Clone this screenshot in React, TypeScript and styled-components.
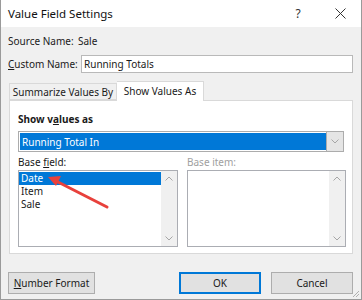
import styled, { createGlobalStyle } from "styled-components"

const GlobalStyle = createGlobalStyle`
  html, body {
    margin: 0;
    padding: 0;
    background: #ffffff;
  }
  body {
    font-family: "Noto Sans", "Open Sans", sans-serif;
    font-size: 10px;
    color: #1a1a1a;
    white-space: nowrap;
  }
`

const Window = styled.div`
  position: relative;
  width: 362px;
  height: 300px;
  box-sizing: border-box;
  border: 1px solid #9a9a9a;
  border-top: none;
  display: flex;
  flex-direction: column;
  background: #f0f0f0;
  overflow: hidden;
`

const TitleBar = styled.div`
  height: 27px;
  background: #ffffff;
  display: flex;
  align-items: center;
  padding-left: 7px;
`

const Title = styled.div`
  flex: 1;
  font-size: 11.5px;
  color: #111;
`

const TitleButton = styled.div`
  width: 42px;
  height: 27px;
  display: flex;
  align-items: center;
  justify-content: center;
  font-size: 12px;
  color: #333;
`

const Body = styled.div`
  flex: 1;
  display: flex;
  flex-direction: column;
  padding: 3px 8px 0 7px;
`

const FieldRow = styled.div<{ $h: number; $mt?: number }>`
  height: ${(p) => p.$h}px;
  margin-top: ${(p) => p.$mt ?? 0}px;
  display: flex;
  align-items: center;
`

const FieldLabel = styled.span<{ $w: number }>`
  width: ${(p) => p.$w}px;
  flex: none;
`

const TextInput = styled.div`
  flex: 1;
  height: 18px;
  box-sizing: border-box;
  border: 1px solid #b9b9b9;
  background: #ffffff;
  display: flex;
  align-items: center;
  padding-left: 2px;
`

const TabStrip = styled.div`
  margin-top: 8px;
  height: 19px;
  display: flex;
  align-items: flex-end;
  padding-left: 1px;
  position: relative;
  z-index: 1;
`

const Tab = styled.div<{ $active?: boolean; $w: number }>`
  width: ${(p) => p.$w}px;
  height: ${(p) => (p.$active ? 20 : 17)}px;
  box-sizing: border-box;
  border: 1px solid #d9d9d9;
  border-bottom: ${(p) => (p.$active ? "none" : "1px solid #d9d9d9")};
  border-left: ${(p) => (p.$active ? "none" : "1px solid #d9d9d9")};
  background: ${(p) => (p.$active ? "#ffffff" : "#f0f0f0")};
  display: flex;
  align-items: center;
  justify-content: center;
  padding-bottom: ${(p) => (p.$active ? 1 : 0)}px;
  margin-bottom: ${(p) => (p.$active ? -1 : 0)}px;
`

const Panel = styled.div`
  height: 154px;
  box-sizing: border-box;
  border: 1px solid #d9d9d9;
  background: #ffffff;
  padding: 0 8px 0 8px;
  display: flex;
  flex-direction: column;
  margin-left: 1px;
`

const SectionLabel = styled.div`
  margin-top: 10px;
  height: 16px;
  line-height: 16px;
  font-weight: 700;
`

const Dropdown = styled.div`
  margin-top: 4px;
  height: 21px;
  box-sizing: border-box;
  border: 1px solid #acacac;
  display: flex;
  padding: 1px 0 1px 1px;
`

const DropValue = styled.div`
  flex: 1;
  background: #0078d7;
  color: #ffffff;
  display: flex;
  align-items: center;
  padding-left: 2px;
`

const DropButton = styled.div`
  width: 16px;
  margin-top: -1px;
  margin-bottom: -1px;
  background: #e5e5e5;
  border-left: 1px solid #acacac;
  display: flex;
  align-items: center;
  justify-content: center;
`

const ListGrid = styled.div`
  display: grid;
  grid-template-columns: 160px 159px;
  column-gap: 9px;
  margin-top: 2px;
`

const ListLabel = styled.div<{ $disabled?: boolean }>`
  height: 16px;
  line-height: 16px;
  color: ${(p) => (p.$disabled ? "#a0a0a0" : "#1a1a1a")};
`

const ListBox = styled.div`
  height: 77px;
  box-sizing: border-box;
  border: 1px solid #abadb3;
  background: #ffffff;
  display: flex;
`

const ListItems = styled.div`
  flex: 1;
  padding-top: 1px;
`

const ListItem = styled.div<{ $selected?: boolean }>`
  height: 13px;
  line-height: 13px;
  padding-left: 2px;
  background: ${(p) => (p.$selected ? "#0078d7" : "transparent")};
  color: ${(p) => (p.$selected ? "#ffffff" : "#1a1a1a")};
`

const ScrollBar = styled.div`
  width: 16px;
  background: #f0f0f0;
  display: flex;
  flex-direction: column;
  justify-content: space-between;
  align-items: center;
  padding: 5px 0;
`

const Footer = styled.div`
  margin-top: 18px;
  display: flex;
  align-items: center;
`

const Button = styled.div<{ $w: number; $primary?: boolean }>`
  width: ${(p) => p.$w}px;
  height: 22px;
  box-sizing: border-box;
  border: 1px solid ${(p) => (p.$primary ? "#0078d7" : "#adadad")};
  box-shadow: ${(p) => (p.$primary ? "inset 0 0 0 1px #0078d7" : "none")};
  background: #e1e1e1;
  display: flex;
  align-items: center;
  justify-content: center;
  margin-left: ${(p) => (p.$primary ? "auto" : "0")};
`

const ButtonGap = styled.div`
  width: 10px;
`

const ArrowOverlay = styled.svg`
  position: absolute;
  left: 0;
  top: 0;
  pointer-events: none;
`

const Grip = styled.svg`
  position: absolute;
  right: 1px;
  bottom: 1px;
`

function Chevron({ up }: { up?: boolean }) {
  return (
    <svg width="8" height="5" viewBox="0 0 8 5">
      <path
        d={up ? "M0.5 4.5 L4 1 L7.5 4.5" : "M0.5 0.5 L4 4 L7.5 0.5"}
        fill="none"
        stroke="#a6a6a6"
        strokeWidth="1"
      />
    </svg>
  )
}

function App() {
  return (
    <>
      <GlobalStyle />
      <Window>
        <TitleBar>
          <Title>Value Field Settings</Title>
          <TitleButton>?</TitleButton>
          <TitleButton>
            <svg width="11" height="11" viewBox="0 0 11 11">
              <path d="M0.5 0.5 L10.5 10.5 M10.5 0.5 L0.5 10.5" stroke="#333" strokeWidth="1" />
            </svg>
          </TitleButton>
        </TitleBar>
        <Body>
          <FieldRow $h={22}>
            <FieldLabel $w={70}>Source Name:</FieldLabel>
            <span>Sale</span>
          </FieldRow>
          <FieldRow $h={18} $mt={3}>
            <FieldLabel $w={73}>
              <u>C</u>ustom Name:
            </FieldLabel>
            <TextInput>Running Totals</TextInput>
          </FieldRow>
          <TabStrip>
            <Tab $w={108}>Summarize Values By</Tab>
            <Tab $w={87} $active>
              Show Values As
            </Tab>
          </TabStrip>
          <Panel>
            <SectionLabel>
              Show v<u>a</u>lues as
            </SectionLabel>
            <Dropdown>
              <DropValue>Running Total In</DropValue>
              <DropButton>
                <Chevron />
              </DropButton>
            </Dropdown>
            <ListGrid>
              <ListLabel>
                Base <u>f</u>ield:
              </ListLabel>
              <ListLabel $disabled>Base item:</ListLabel>
              <ListBox>
                <ListItems>
                  <ListItem $selected>Date</ListItem>
                  <ListItem>Item</ListItem>
                  <ListItem>Sale</ListItem>
                </ListItems>
                <ScrollBar>
                  <Chevron up />
                  <Chevron />
                </ScrollBar>
              </ListBox>
              <ListBox>
                <ListItems />
                <ScrollBar>
                  <Chevron up />
                  <Chevron />
                </ScrollBar>
              </ListBox>
            </ListGrid>
          </Panel>
          <Footer>
            <Button $w={87}>
              <span>
                <u>N</u>umber Format
              </span>
            </Button>
            <Button $w={82} $primary>
              OK
            </Button>
            <ButtonGap />
            <Button $w={82}>Cancel</Button>
          </Footer>
        </Body>
        <ArrowOverlay width="362" height="300" viewBox="0 0 362 300">
          <line x1="106" y1="207" x2="55" y2="181" stroke="#e8413c" strokeWidth="3" strokeLinecap="round" />
          <polygon points="47,177 60,176 55,186" fill="#e8413c" />
        </ArrowOverlay>
        <Grip width="8" height="8" viewBox="0 0 8 8">
          <path d="M7 1 L1 7 M7 4 L4 7" stroke="#b0b0b0" strokeWidth="1" />
        </Grip>
      </Window>
    </>
  )
}

export default App
